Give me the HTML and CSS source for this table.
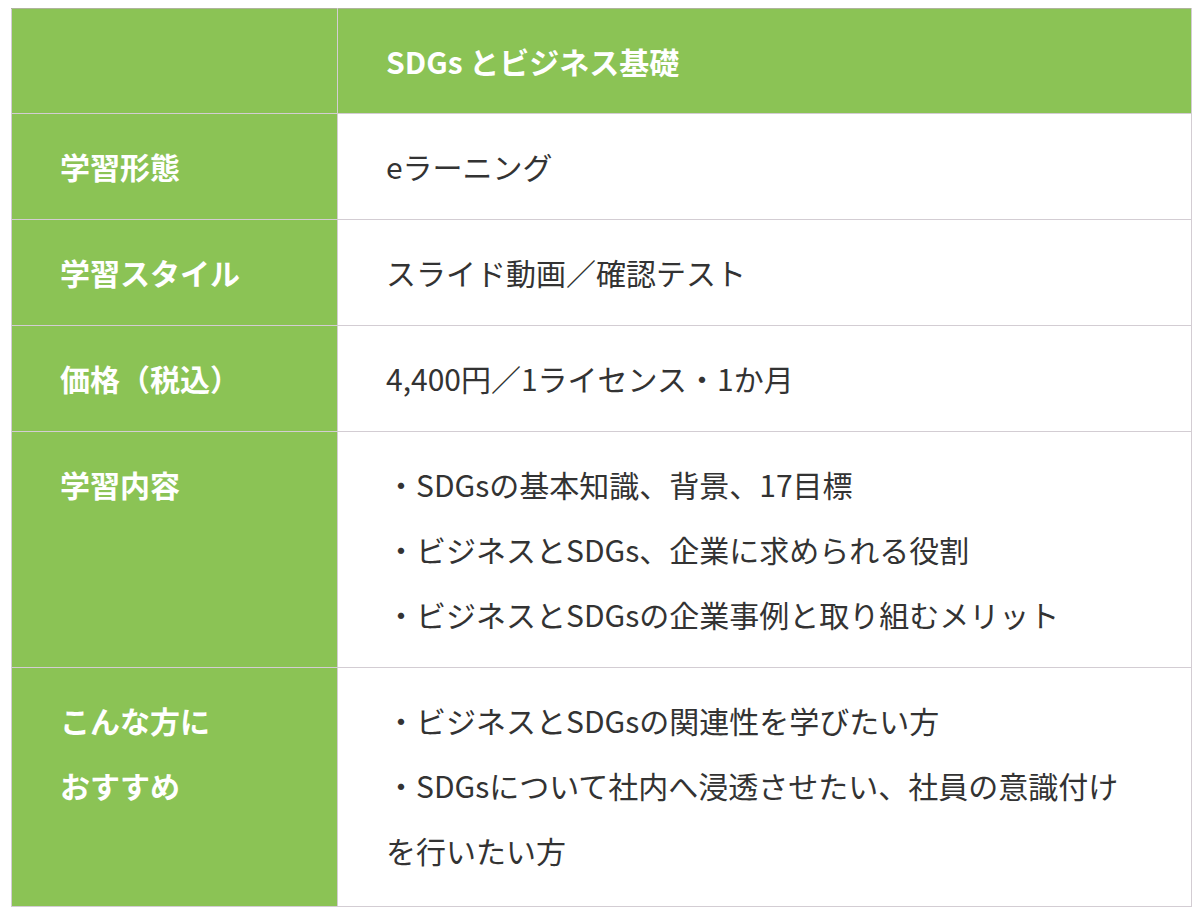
FILE: index.html
```html
<!DOCTYPE html>
<html lang="ja">
<head>
<meta charset="utf-8">
<title>SDGs とビジネス基礎</title>
<link rel="stylesheet" href="styles.css">
</head>
<body>
<table class="course">
  <thead>
    <tr class="head-row">
      <th class="label"></th>
      <th class="title">SDGs とビジネス基礎</th>
    </tr>
  </thead>
  <tbody>
    <tr>
      <th class="label">学習形態</th>
      <td class="value">eラーニング</td>
    </tr>
    <tr>
      <th class="label">学習スタイル</th>
      <td class="value">スライド動画／確認テスト</td>
    </tr>
    <tr>
      <th class="label">価格（税込）</th>
      <td class="value">4,400円／1ライセンス・1か月</td>
    </tr>
    <tr>
      <th class="label">学習内容</th>
      <td class="value">・SDGsの基本知識、背景、17目標<br>・ビジネスとSDGs、企業に求められる役割<br>・ビジネスとSDGsの企業事例と取り組むメリット</td>
    </tr>
    <tr class="last-row">
      <th class="label">こんな方に<br>おすすめ</th>
      <td class="value">・ビジネスとSDGsの関連性を学びたい方<br>・SDGsについて社内へ浸透させたい、社員の意識付け<br>を行いたい方</td>
    </tr>
  </tbody>
</table>
</body>
</html>
```

FILE: styles.css
```css
html, body {
  margin: 0;
  padding: 0;
  background: #ffffff;
}

body {
  padding: 8px 9px 0 11px;
  font-family: "Noto Sans CJK JP", "Noto Sans", sans-serif;
  color: #333333;
}

.course {
  width: 1181px;
  border-collapse: collapse;
  table-layout: fixed;
  font-size: 30px;
  line-height: 65px;
}

.course th,
.course td {
  border: 1px solid #d3cdd3;
  padding: 20px 16px 20px 48px;
  text-align: left;
  vertical-align: top;
}

.head-row th {
  border-top-color: #aeb59a;
  padding-top: 20px;
  padding-bottom: 19px;
}

.last-row th,
.last-row td {
  padding-bottom: 23px;
}

.label {
  width: 261px;
  background: #8bc355;
  color: #ffffff;
  font-weight: 700;
}

.title {
  background: #8bc355;
  color: #ffffff;
  font-weight: 700;
}

.value {
  background: #ffffff;
  color: #333333;
  font-weight: 400;
  white-space: nowrap;
}
```
